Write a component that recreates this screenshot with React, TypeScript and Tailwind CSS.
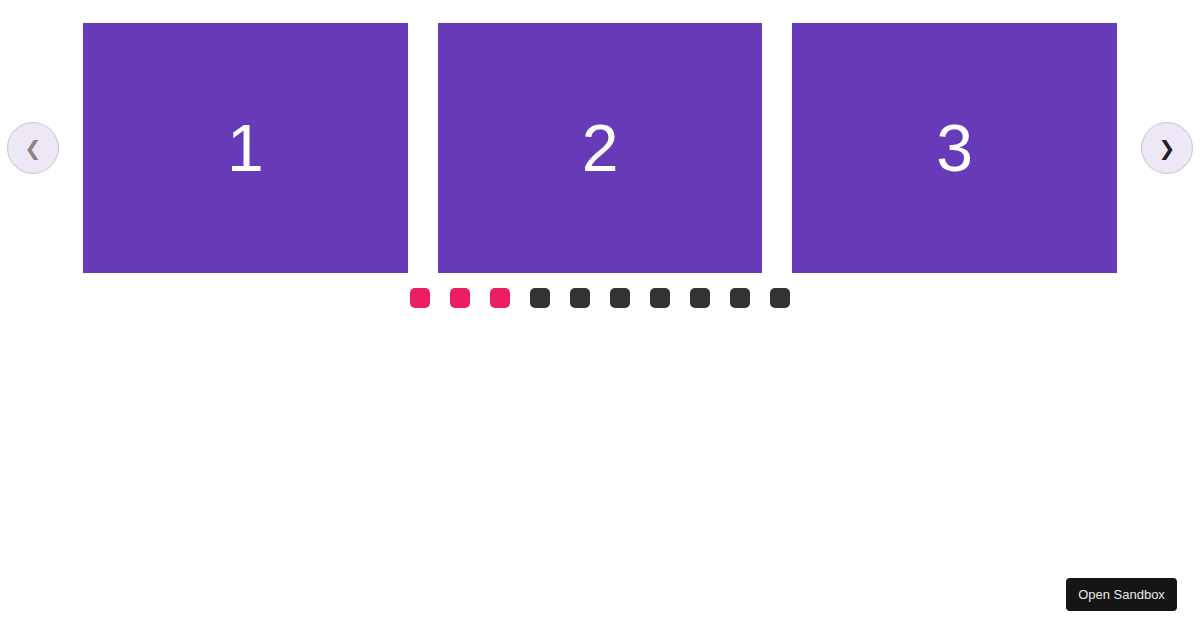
import React, { useState } from "react";

const SLIDES = [1, 2, 3, 4, 5, 6, 7, 8, 9, 10];

const ArrowButton = ({
  dir,
  disabled,
  onClick,
}: {
  dir: "prev" | "next";
  disabled: boolean;
  onClick: () => void;
}) => (
  <button
    onClick={onClick}
    className={`flex items-center justify-center w-[52px] h-[52px] shrink-0 rounded-full bg-[#ede7f6] border border-[#c9c4d0] text-[20px] font-bold font-['DejaVu_Sans',sans-serif] ${
      disabled ? "text-[#8a8580]" : "text-[#222]"
    }`}
  >
    {dir === "prev" ? "❮" : "❯"}
  </button>
);

const App = () => {
  const [page, setPage] = useState(0);

  return (
    <div className="relative w-full h-[630px] bg-white font-['Liberation_Sans',Arial,sans-serif]">
      <div className="flex items-start px-[7px] pt-[23px] gap-[9px]">
        <div className="flex items-center h-[250px]">
          <ArrowButton
            dir="prev"
            disabled={page === 0}
            onClick={() => setPage(Math.max(0, page - 1))}
          />
        </div>
        <div className="flex flex-col w-[1064px] shrink-0">
          <div className="grid grid-cols-3">
            {SLIDES.slice(page, page + 3).map((n) => (
              <div key={n} className="px-[15px]">
                <div className="flex items-center justify-center h-[250px] bg-[#673ab7] text-white text-[66px]">
                  {n}
                </div>
              </div>
            ))}
          </div>
          <div className="flex justify-center gap-5 mt-[15px]">
            {SLIDES.map((n, idx) => (
              <span
                key={n}
                className={`w-5 h-5 rounded-[5px] ${
                  idx >= page && idx < page + 3 ? "bg-[#e91e63]" : "bg-[#333333]"
                }`}
              />
            ))}
          </div>
        </div>
        <div className="flex items-center h-[250px]">
          <ArrowButton
            dir="next"
            disabled={page >= SLIDES.length - 3}
            onClick={() => setPage(Math.min(SLIDES.length - 3, page + 1))}
          />
        </div>
      </div>
      <button className="absolute right-[23px] bottom-[19px] w-[111px] h-[33px] rounded bg-[#151515] text-[#e8e8e8] text-[13px] font-['Liberation_Sans',Arial,sans-serif]">
        Open Sandbox
      </button>
    </div>
  );
};

export default App;
